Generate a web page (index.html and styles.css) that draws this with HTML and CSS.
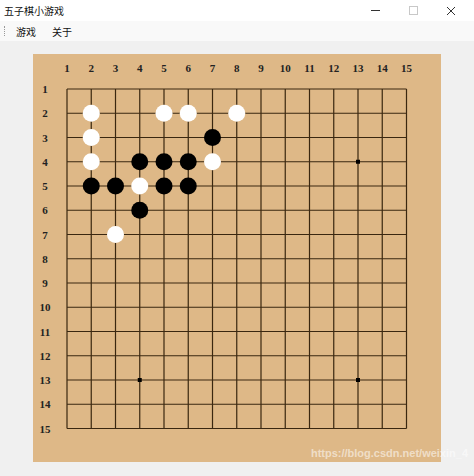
FILE: index.html
```html
<!DOCTYPE html>
<html lang="zh">
<head>
  <meta charset="UTF-8" />
  <title>五子棋小游戏</title>
  <link rel="stylesheet" href="styles.css">
</head>
<body>
  <div class="titlebar">
    <span class="title">五子棋小游戏</span>
    <div class="controls">
      <span class="ctl min"></span>
      <span class="ctl max"></span>
      <span class="ctl close">
        <svg width="10" height="10" viewBox="0 0 10 10"><path d="M1 1L9 9M9 1L1 9"/></svg>
      </span>
    </div>
  </div>

  <div class="menubar">
    <span class="grip"></span>
    <span class="menu-item">游戏</span>
    <span class="menu-item">关于</span>
  </div>

  <div class="client">
    <div class="board">
      <svg width="408" height="408" viewBox="0 0 408 408">
        <g class="cols">
          <text x="34" y="14">1</text>
          <text x="58.25" y="14">2</text>
          <text x="82.5" y="14">3</text>
          <text x="106.75" y="14">4</text>
          <text x="131" y="14">5</text>
          <text x="155.25" y="14">6</text>
          <text x="179.5" y="14">7</text>
          <text x="203.75" y="14">8</text>
          <text x="228" y="14">9</text>
          <text x="252.25" y="14">10</text>
          <text x="276.5" y="14">11</text>
          <text x="300.75" y="14">12</text>
          <text x="325" y="14">13</text>
          <text x="349.25" y="14">14</text>
          <text x="373.5" y="14">15</text>
        </g>
        <g class="rows">
          <text x="12" y="35">1</text>
          <text x="12" y="59.25">2</text>
          <text x="12" y="83.5">3</text>
          <text x="12" y="107.75">4</text>
          <text x="12" y="132">5</text>
          <text x="12" y="156.25">6</text>
          <text x="12" y="180.5">7</text>
          <text x="12" y="204.75">8</text>
          <text x="12" y="229">9</text>
          <text x="12" y="253.25">10</text>
          <text x="12" y="277.5">11</text>
          <text x="12" y="301.75">12</text>
          <text x="12" y="326">13</text>
          <text x="12" y="350.25">14</text>
          <text x="12" y="374.5">15</text>
        </g>

        <!-- grid -->
        <path class="grid" d="M34 35H373.5M34 59.25H373.5M34 83.5H373.5M34 107.75H373.5M34 132H373.5M34 156.25H373.5M34 180.5H373.5M34 204.75H373.5M34 229H373.5M34 253.25H373.5M34 277.5H373.5M34 301.75H373.5M34 326H373.5M34 350.25H373.5M34 374.5H373.5
          M34 35V374.5M58.25 35V374.5M82.5 35V374.5M106.75 35V374.5M131 35V374.5M155.25 35V374.5M179.5 35V374.5M203.75 35V374.5M228 35V374.5M252.25 35V374.5M276.5 35V374.5M300.75 35V374.5M325 35V374.5M349.25 35V374.5M373.5 35V374.5"/>

        <!-- star points -->
        <rect class="star" x="323" y="105.75" width="4" height="4"/>
        <rect class="star" x="104.75" y="324" width="4" height="4"/>
        <rect class="star" x="323" y="324" width="4" height="4"/>

        <!-- white stones -->
        <g class="white">
          <circle cx="58.25" cy="59.25" r="8.5"/>
          <circle cx="58.25" cy="83.5" r="8.5"/>
          <circle cx="58.25" cy="107.75" r="8.5"/>
          <circle cx="131" cy="59.25" r="8.5"/>
          <circle cx="155.25" cy="59.25" r="8.5"/>
          <circle cx="203.75" cy="59.25" r="8.5"/>
          <circle cx="179.5" cy="107.75" r="8.5"/>
          <circle cx="82.5" cy="180.5" r="8.5"/>
          <circle cx="106.75" cy="132" r="8.5"/>
        </g>

        <!-- black stones -->
        <g class="black">
          <circle cx="179.5" cy="83.5" r="8.5"/>
          <circle cx="106.75" cy="107.75" r="8.5"/>
          <circle cx="131" cy="107.75" r="8.5"/>
          <circle cx="155.25" cy="107.75" r="8.5"/>
          <circle cx="58.25" cy="132" r="8.5"/>
          <circle cx="82.5" cy="132" r="8.5"/>
          <circle cx="131" cy="132" r="8.5"/>
          <circle cx="155.25" cy="132" r="8.5"/>
          <circle cx="106.75" cy="156.25" r="8.5"/>
        </g>
      </svg>
    </div>
    <div class="watermark">https://blog.csdn.net/weixin_4</div>
  </div>
</body>
</html>
```
FILE: styles.css
```css
body {
  margin: 0;
  width: 474px;
  height: 476px;
  overflow: hidden;
  background: #f0f0f0;
  font-family: "Noto Sans CJK SC", "Noto Sans", sans-serif;
  color: #111;
}
.titlebar {
  height: 21px;
  background: #fff;
  display: flex;
  align-items: center;
  padding-left: 4px;
  font-size: 10px;
}
.controls {
  margin-left: auto;
  display: flex;
  align-items: center;
  height: 21px;
}
.ctl {
  width: 38px;
  display: flex;
  justify-content: center;
  align-items: center;
}
.min::before {
  content: "";
  width: 9px;
  height: 1px;
  background: #333;
}
.max::before {
  content: "";
  width: 7px;
  height: 7px;
  border: 1px solid #c8c8c8;
}
.close {
  padding-right: 4px;
}
.close svg path {
  stroke: #333;
  stroke-width: 1;
}
.menubar {
  height: 20px;
  background: #f9f9f9;
  display: flex;
  align-items: center;
  font-size: 10px;
}
.grip {
  width: 1px;
  height: 10px;
  margin: 0 10px 0 4px;
  border-left: 1px dotted #999;
}
.menu-item {
  margin-right: 16px;
}
.client {
  position: relative;
  padding: 13px 0 0 33px;
}
.board {
  width: 408px;
  height: 408px;
  background: #deb887;
}
.board svg {
  display: block;
}
.board text {
  font-family: "Liberation Serif", serif;
  font-weight: bold;
  font-size: 11px;
  fill: #222;
  text-anchor: middle;
  dominant-baseline: central;
}
.grid {
  fill: none;
  stroke: #3a2710;
  stroke-width: 1.2;
}
.star {
  fill: #000;
}
.white circle {
  fill: #fff;
}
.black circle {
  fill: #000;
}
.watermark {
  position: absolute;
  right: 6px;
  top: 406px;
  font-family: "Liberation Sans", sans-serif;
  font-size: 11px;
  font-weight: bold;
  color: rgba(255, 255, 255, 0.55);
}
```
